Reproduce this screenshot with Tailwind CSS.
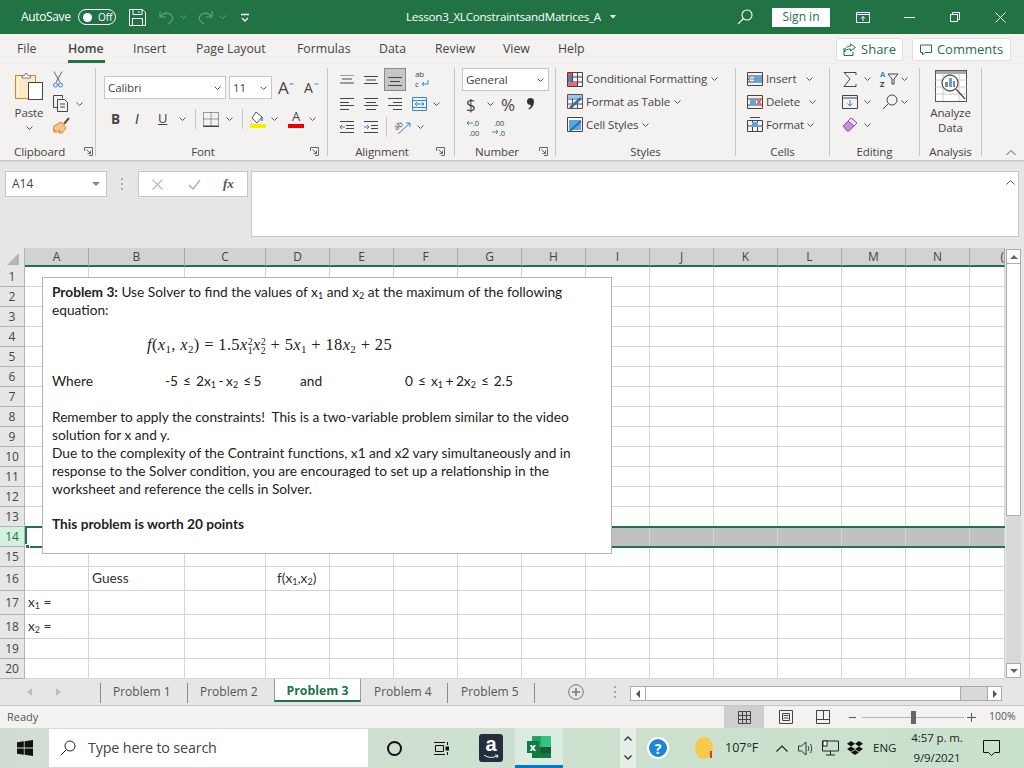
<!DOCTYPE html>
<html><head><meta charset="utf-8"><script src="https://cdn.jsdelivr.net/npm/@tailwindcss/browser@4"></script></head>
<body class="w-[1024px] h-[768px] overflow-hidden bg-[#e6e6e6] font-['Open_Sans',sans-serif] text-[#444]">
<svg width="0" height="0" class="absolute"><defs>
<symbol id="ch" viewBox="0 0 7 4"><path d="M.5.5l3 3 3-3" fill="none" stroke="#555" stroke-width="1"/></symbol>
<symbol id="lau" viewBox="0 0 9 9"><path d="M.5 4V.5H8.500V8.500H5M2.500 2.500l4 4M6.500 3.500v3h-3" fill="none" stroke="#666"/></symbol>
</defs></svg>

<!-- title bar -->
<div class="h-[34px] bg-[#217346] flex items-center text-white text-[12px]">
 <span class="ml-[21px] w-[50px] whitespace-nowrap text-[12px] tracking-[-0.35px]">AutoSave</span>
 <div class="ml-[7px] w-[38px] h-[16px] rounded-full border border-white flex items-center pl-[4px]"><span class="w-[9px] h-[9px] rounded-full bg-white"></span><span class="ml-[6px] text-[10px]">Off</span></div>
 <svg class="ml-[13px]" width="17" height="17" viewBox="0 0 17 17" fill="none" stroke="#fff"><path d="M.5.500h13l3 3v13H.5zM4 .5v5h9v-5M3.500 16.500v-7h10v7M10 2v2"/></svg>
 <svg class="ml-[13px] opacity-30" width="15" height="15" viewBox="0 0 15 15" fill="none" stroke="#fff" stroke-width="1.200"><path d="M1 1v6h6M1 7c4-5 9-5 12-1 1.500 3-.5 6-4 8"/></svg>
 <svg class="ml-[6px] opacity-30" width="7" height="4" viewBox="0 0 7 4"><path d="M.5.500l3 3 3-3" fill="none" stroke="#fff"/></svg>
 <svg class="ml-[11px] opacity-30" width="15" height="15" viewBox="0 0 15 15" fill="none" stroke="#fff" stroke-width="1.200"><path d="M14 1v6H8M14 7C10 2 5 2 2 6c-1.500 3 .5 6 4 8"/></svg>
 <svg class="ml-[6px] opacity-30" width="7" height="4" viewBox="0 0 7 4"><path d="M.5.500l3 3 3-3" fill="none" stroke="#fff"/></svg>
 <svg class="ml-[14px]" width="10" height="9" viewBox="0 0 10 9" fill="none" stroke="#fff"><path d="M1 1.500h8M2 5l3 3 3-3" stroke-width="1.300"/></svg>
 <span class="ml-[156px] w-[198px] whitespace-nowrap text-[11.600px] tracking-[-0.25px]">Lesson3_XLConstraintsandMatrices_A</span>
 <svg class="ml-[6px]" width="6" height="4" viewBox="0 0 6 4"><path d="M0 0h6L3 3.500z" fill="#fff"/></svg>
 <svg class="ml-[121px]" width="16" height="16" viewBox="0 0 16 16" fill="none" stroke="#fff" stroke-width="1.100"><circle cx="10" cy="6" r="5"/><path d="M6.500 9.500L1 15"/></svg>
 <div class="ml-[19px] w-[58px] h-[19px] bg-white text-[#217346] flex items-center justify-center text-[12px]">Sign in</div>
 <svg class="ml-[26px]" width="14" height="11" viewBox="0 0 14 11" fill="none" stroke="#fff"><path d="M.5.500h13v10H.5zM.5 2.500h13M7 9V4.500M5 6.500l2-2 2 2"/></svg>
 <span class="ml-[34px] w-[11px] h-[1px] bg-white"></span>
 <svg class="ml-[35px]" width="10" height="10" viewBox="0 0 10 10" fill="none" stroke="#fff"><path d="M.5 2.500h7v7h-7zM2.500 2.500v-2h7v7h-2"/></svg>
 <svg class="ml-[35px]" width="11" height="11" viewBox="0 0 11 11" stroke="#fff"><path d="M.5.500l10 10M10.500.500l-10 10"/></svg>
</div>

<!-- tab row -->
<div class="h-[30px] bg-[#f3f2f1] flex items-center pt-[1px] text-[12.300px] text-[#444] whitespace-nowrap">
 <span class="ml-[17px] w-[51px]">File</span>
 <span class="w-[37px] mr-[28px] h-[28px] self-start border-b-[3px] border-[#217346] flex items-center pt-[3px] font-semibold">Home</span>
 <span class="w-[63px]">Insert</span><span class="w-[101px]">Page Layout</span><span class="w-[82px]">Formulas</span><span class="w-[56px]">Data</span><span class="w-[68px]">Review</span><span class="w-[55px]">View</span><span class="w-[278px]">Help</span>
 <div class="w-[67px] h-[23px] bg-white rounded-[2px] border border-[#e1dfdd] flex items-center justify-center gap-[5px] text-[#217346] text-[13px] font-medium"><svg width="13" height="13" viewBox="0 0 13 13" fill="none" stroke="#217346"><path d="M7.500 1v2C3 3.500 1.500 6 1.500 9c1-2 3-3 6-3v2l5-3.500zM1 5v7.500h9V9"/></svg>Share</div>
 <div class="ml-[9px] w-[99px] h-[23px] bg-white rounded-[2px] border border-[#e1dfdd] flex items-center justify-center gap-[5px] text-[#217346] text-[13px] font-medium"><svg width="12" height="12" viewBox="0 0 12 12" fill="none" stroke="#217346"><path d="M.5 1h11v7.500H5L2.500 11V8.500h-2z"/></svg>Comments</div>
</div>

<!-- ribbon -->
<div class="h-[96px] bg-[#f3f2f1] flex pt-[4px] items-start text-[11.500px] text-[#444] whitespace-nowrap shadow-[0_1px_2px_#bbb] relative tracking-[-0.1px]">
 <!-- clipboard -->
 <div class="w-[96px] h-[88px] border-r border-[#c8c6c4] flex flex-col">
  <div class="flex-1 flex pl-[15px]">
   <div class="w-[28px] mr-[6px] flex flex-col items-center">
    <svg class="mt-[3px]" width="28" height="29" viewBox="0 0 28 29"><rect x=".5" y="4.500" width="20" height="23" fill="#fce8c3" stroke="#d9862a"/><path d="M3 7h16M3 7v20" stroke="#fff" fill="none"/><path d="M7 7V4.500h2.500L11 2l2 2.500h2.500V7z" fill="#fff" stroke="#777"/><rect x="13.500" y="11.500" width="14" height="17" fill="#fff" stroke="#444"/></svg>
    <span class="mt-[4px]">Paste</span>
    <svg class="mt-[5px]" width="7" height="4"><use href="#ch"/></svg>
   </div>
   <div class="ml-[4px] flex flex-col items-start">
    <svg class="mt-[3px]" width="10" height="17" viewBox="0 0 10 17" fill="none"><path d="M1 .5l6 11M9 .5l-6 11" stroke="#666"/><circle cx="2.500" cy="14" r="2" stroke="#2b8ad4"/><circle cx="7.500" cy="14" r="2" stroke="#2b8ad4"/></svg>
    <div class="mt-[7px] flex items-center gap-[6px]"><svg width="17" height="17" viewBox="0 0 17 17" fill="none" stroke="#444"><path d="M.5.500h9v3M.5.500v12h4"/><path d="M4.500 4.500h7l3 3v9h-10zM7 9h5M7 12h5"/></svg><svg width="7" height="4"><use href="#ch"/></svg></div>
    <svg class="mt-[5px]" width="17" height="17" viewBox="0 0 17 17"><path d="M1 9l7-4 5 6-4 5H6l1-3-3 2H1l1-2-2 1z" fill="#f7c48c" stroke="#d9862a"/><path d="M11 7l5-6" stroke="#555" stroke-width="2"/></svg>
   </div>
  </div>
  <div class="h-[14px] leading-[20px] flex items-start"><span class="ml-[14px] w-[70px]">Clipboard</span><svg class="mt-[5px]" width="9" height="9"><use href="#lau"/></svg></div>
 </div>
 <!-- font -->
 <div class="w-[232px] h-[88px] border-r border-[#c8c6c4] flex flex-col">
  <div class="flex-1 pt-[8px] pl-[8px]">
   <div class="flex items-center h-[23px]">
    <div class="w-[122px] h-[23px] bg-white border border-[#c8c6c4] flex items-center justify-between pl-[3px] pr-[4px]"><span>Calibri</span><svg width="7" height="4"><use href="#ch"/></svg></div>
    <div class="ml-[3px] w-[43px] h-[23px] bg-white border border-[#c8c6c4] flex items-center justify-between pl-[3px] pr-[4px]"><span>11</span><svg width="7" height="4"><use href="#ch"/></svg></div>
    <span class="ml-[6px] w-[11px] text-[17px] text-[#444] leading-none">A</span><svg class="mb-[8px]" width="5" height="4" viewBox="0 0 5 4"><path d="M.5 3L2.500 1l2 2" fill="none" stroke="#666"/></svg>
    <span class="ml-[10px] w-[10px] text-[14px] leading-none">A</span><svg class="mb-[8px]" width="5" height="4" viewBox="0 0 5 4"><path d="M.5 1l2 2 2-2" fill="none" stroke="#2b8ad4"/></svg>
   </div>
   <div class="flex items-center h-[20px] mt-[10px] pl-[7px]">
    <span class="w-[24px] font-bold text-[13.500px]">B</span><span class="w-[23px] italic text-[14px] font-['Liberation_Sans']">I</span><span class="w-[17px] underline text-[13px]">U</span>
    <svg class="ml-[4px]" width="7" height="4"><use href="#ch"/></svg>
    <span class="ml-[9px] w-[1px] h-[20px] bg-[#c8c6c4]"></span>
    <svg class="ml-[7px]" width="16" height="15" viewBox="0 0 16 15" fill="none" stroke="#444" stroke-dasharray="1 1"><path d="M.5.500h15v13H.5zM8 .5v13M.5 7h15"/><path d="M0 14.500h16" stroke-dasharray="none"/></svg>
    <svg class="ml-[7px]" width="7" height="4"><use href="#ch"/></svg>
    <span class="ml-[9px] w-[1px] h-[20px] bg-[#c8c6c4]"></span>
    <svg class="ml-[7px]" width="16" height="17" viewBox="0 0 16 17"><path d="M6 1l6 5-5 6-5-5z" fill="#fff" stroke="#555"/><path d="M12 6v4" stroke="#2b8ad4" stroke-width="1.500"/><rect y="13" width="16" height="4" fill="#ffeb00"/></svg>
    <svg class="ml-[5px]" width="7" height="4"><use href="#ch"/></svg>
    <div class="ml-[10px] w-[16px] flex flex-col items-center leading-none"><span class="text-[13px] h-[13px] leading-[13px]">A</span><span class="mt-[1px] w-[16px] h-[4px] bg-[#f00000]"></span></div>
    <svg class="ml-[5px]" width="7" height="4"><use href="#ch"/></svg>
   </div>
  </div>
  <div class="h-[14px] leading-[20px] flex items-start"><span class="w-[214px] text-center">Font</span><svg class="mt-[5px]" width="9" height="9"><use href="#lau"/></svg></div>
 </div>
 <!-- alignment -->
 <div class="w-[127px] h-[88px] border-r border-[#c8c6c4] flex flex-col">
  <div class="flex-1 pl-[12px]">
   <div class="h-[23px] flex items-center">
    <svg width="14" height="10" viewBox="0 0 14 10" stroke="#444"><path d="M0 .5h14M2 4.500h10M0 8.500h14" transform="translate(0,-.5)"/></svg>
    <svg class="ml-[10px]" width="14" height="10" viewBox="0 0 14 10" stroke="#444"><path d="M0 1.500h14M2 5h10M0 8.500h14"/></svg>
    <div class="ml-[6px] w-[22px] h-[23px] bg-[#c6c6c6] border border-[#8a8a8a] flex items-center justify-center"><svg width="14" height="12" viewBox="0 0 14 12" stroke="#444"><path d="M0 3.500h14M2 7.500h10M0 11.500h14"/></svg></div>
    <svg class="ml-[9px] overflow-visible" width="14" height="20" viewBox="0 0 14 20" fill="none"><text x="0" y="7" font-size="8" fill="#444" font-family="Open Sans">ab</text><text x="0" y="17" font-size="8" fill="#444" font-family="Open Sans">c</text><path d="M13 10v4H7M9 12l-2 2 2 2" stroke="#2b8ad4"/></svg>
   </div>
   <div class="h-[23px] flex items-center mt-[1px]">
    <svg width="14" height="12" viewBox="0 0 14 12" stroke="#444"><path d="M0 .5h14M0 4.500h9M0 7.500h14M0 11.500h9"/></svg>
    <svg class="ml-[10px]" width="14" height="12" viewBox="0 0 14 12" stroke="#444"><path d="M0 .5h14M2 4.500h10M0 7.500h14M2 11.500h10"/></svg>
    <svg class="ml-[10px]" width="14" height="12" viewBox="0 0 14 12" stroke="#444"><path d="M0 .5h14M5 4.500h9M0 7.500h14M5 11.500h9"/></svg>
    <svg class="ml-[10px]" width="15" height="14" viewBox="0 0 15 14" fill="none" stroke="#2b8ad4"><path d="M.5.500h14v13H.5zM.5 3.500h14M.5 10.500h14"/><path d="M3 7h9M5 5L3 7l2 2M10 5l2 2-2 2" stroke="#2b8ad4"/></svg>
    <svg class="ml-[6px]" width="7" height="4"><use href="#ch"/></svg>
   </div>
   <div class="h-[23px] flex items-center">
    <svg width="14" height="12" viewBox="0 0 14 12" fill="none"><path d="M0 .5h14M6 4.500h8M6 7.500h8M0 11.500h14" stroke="#444"/><path d="M5 6H0M2 4L0 6l2 2" stroke="#2b8ad4"/></svg>
    <svg class="ml-[10px]" width="14" height="12" viewBox="0 0 14 12" fill="none"><path d="M0 .5h14M7 4.500h7M7 7.500h7M0 11.500h14" stroke="#444"/><path d="M0 6h5M3 4l2 2-2 2" stroke="#2b8ad4"/></svg>
    <span class="ml-[8px] w-[1px] h-[20px] bg-[#c8c6c4]"></span>
    <svg class="ml-[7px] overflow-visible" width="17" height="16" viewBox="0 0 17 16" fill="none"><text x="0" y="9" font-size="8" fill="#444" font-family="Open Sans" transform="rotate(-40 5 7)">ab</text><path d="M4 15L16 4M16 4h-4M16 4v4" stroke="#2b8ad4"/></svg>
    <svg class="ml-[6px]" width="7" height="4"><use href="#ch"/></svg>
   </div>
  </div>
  <div class="h-[14px] leading-[20px] flex items-start"><span class="w-[108px] text-center">Alignment</span><svg class="mt-[5px]" width="9" height="9"><use href="#lau"/></svg></div>
 </div>
 <!-- number -->
 <div class="w-[101px] h-[88px] border-r border-[#c8c6c4] flex flex-col">
  <div class="flex-1 pl-[7px]">
   <div class="w-[87px] h-[23px] bg-white border border-[#c8c6c4] flex items-center justify-between pl-[3px] pr-[4px]"><span>General</span><svg width="7" height="4"><use href="#ch"/></svg></div>
   <div class="h-[24px] flex items-center pl-[4px] mt-[1px]"><span class="w-[14px] text-[17px] leading-none">$</span><svg class="ml-[7px]" width="7" height="4"><use href="#ch"/></svg><span class="ml-[7px] text-[17px] leading-none">%</span>
    <svg class="ml-[12px]" width="8" height="12" viewBox="0 0 8 12"><path d="M0 3.500a3.500 3.500 0 1 1 7 0c0 4-2 6.500-5 8l-.6-1c1.500-1 2.400-2.200 2.600-3.600A3.400 3.400 0 0 1 0 3.500z" fill="#333"/></svg></div>
   <div class="h-[23px] flex items-center pl-[4px]">
    <svg class="overflow-visible" width="17" height="18" viewBox="0 0 17 18" fill="none"><text x="7" y="7" font-size="7.500" fill="#444" font-family="Open Sans">.0</text><text x="3" y="17" font-size="7.500" fill="#444" font-family="Open Sans">.00</text><path d="M7 4H1M3 2L1 4l2 2" stroke="#2b8ad4"/></svg>
    <svg class="ml-[8px] overflow-visible" width="17" height="18" viewBox="0 0 17 18" fill="none"><text x="3" y="7" font-size="7.500" fill="#444" font-family="Open Sans">.00</text><text x="8" y="17" font-size="7.500" fill="#444" font-family="Open Sans">.0</text><path d="M1 13h6M5 11l2 2-2 2" stroke="#2b8ad4"/></svg>
   </div>
  </div>
  <div class="h-[14px] leading-[20px] flex items-start"><span class="w-[84px] text-center">Number</span><svg class="mt-[5px]" width="9" height="9"><use href="#lau"/></svg></div>
 </div>
 <!-- styles -->
 <div class="w-[180px] h-[88px] border-r border-[#c8c6c4] flex flex-col">
  <div class="flex-1 pl-[11px]">
   <div class="h-[22px] flex items-center"><svg width="16" height="15" viewBox="0 0 16 15"><path d="M.5.500h15v14H.5zM5.500.5v14M10.500.5v14M.5 5h15M.5 10h15" fill="none" stroke="#444"/><rect x="1" y="1" width="4" height="4" fill="#e84c4c"/><rect x="1" y="5" width="4" height="5" fill="#2b8ad4"/><rect x="1" y="10" width="9" height="4" fill="#ee6a6a"/></svg><span class="ml-[3px]">Conditional Formatting</span><svg class="ml-[4px]" width="7" height="4"><use href="#ch"/></svg></div>
   <div class="h-[23px] flex items-center"><svg width="16" height="15" viewBox="0 0 16 15"><path d="M.5.500h15v14H.5zM5.500.5v14M10.500.5v14M.5 5h15M.5 10h15" fill="none" stroke="#555"/><rect x="1" y="1" width="14" height="3.500" fill="#9cc8ec"/><path d="M3 14L14 4" stroke="#2b6fb0" stroke-width="2.500"/></svg><span class="ml-[3px]">Format as Table</span><svg class="ml-[4px]" width="7" height="4"><use href="#ch"/></svg></div>
   <div class="h-[23px] flex items-center"><svg width="16" height="15" viewBox="0 0 16 15"><path d="M.5.500h15v14H.5z" fill="#fff" stroke="#444"/><rect x="2" y="3" width="12" height="10" fill="#5ba5e0"/><path d="M3 14L14 4" stroke="#2b6fb0" stroke-width="2"/></svg><span class="ml-[3px]">Cell Styles</span><svg class="ml-[4px]" width="7" height="4"><use href="#ch"/></svg></div>
  </div>
  <div class="h-[14px] leading-[20px] text-center">Styles</div>
 </div>
 <!-- cells -->
 <div class="w-[94px] h-[88px] border-r border-[#c8c6c4] flex flex-col">
  <div class="flex-1 pl-[11px]">
   <div class="h-[22px] flex items-center"><svg width="16" height="14" viewBox="0 0 16 14" fill="none"><path d="M.5.500h15v13H.5zM.5 4h15M.5 10h15" stroke="#444"/><rect x="7" y="4.500" width="8" height="5" fill="#5ba5e0"/><path d="M8 7H1M3 5L1 7l2 2" stroke="#2b8ad4"/></svg><span class="ml-[3px] w-[40px]">Insert</span><svg width="7" height="4"><use href="#ch"/></svg></div>
   <div class="h-[23px] flex items-center"><svg width="16" height="14" viewBox="0 0 16 14" fill="none"><path d="M.5.500h15v13H.5zM.5 4h15M.5 10h15" stroke="#444"/><rect x="3" y="4.500" width="6" height="5" fill="#5ba5e0"/><path d="M10 4.500l4 5M14 4.500l-4 5" stroke="#e84c4c" stroke-width="1.500"/></svg><span class="ml-[3px] w-[43px]">Delete</span><svg width="7" height="4"><use href="#ch"/></svg></div>
   <div class="h-[23px] flex items-center"><svg width="16" height="15" viewBox="0 0 16 15" fill="none"><path d="M.5 3.500h15v11H.5zM5.500 3.500v11M10.500 3.500v11M.5 9h15M3 .5h10" stroke="#444"/><rect x="5" y="5" width="6" height="5" fill="#5ba5e0"/></svg><span class="ml-[3px] w-[41px]">Format</span><svg width="7" height="4"><use href="#ch"/></svg></div>
  </div>
  <div class="h-[14px] leading-[20px] text-center">Cells</div>
 </div>
 <!-- editing -->
 <div class="w-[90px] h-[88px] border-r border-[#c8c6c4] flex flex-col">
  <div class="flex-1 pl-[12px]">
   <div class="h-[22px] flex items-center"><svg width="16" height="15" viewBox="0 0 16 15" fill="none" stroke="#444"><path d="M14 3V.5H2L8 7l-6 7.500h12V12"/></svg><svg class="ml-[6px]" width="7" height="4"><use href="#ch"/></svg><svg class="ml-[9px] overflow-visible" width="19" height="18" viewBox="0 0 19 18" fill="none"><text x="0" y="7" font-size="7.500" fill="#2b8ad4" font-family="Open Sans" font-weight="bold">A</text><text x="0" y="17" font-size="7.500" fill="#444" font-family="Open Sans" font-weight="bold">Z</text><path d="M8 4h10l-4 5v5h-2V9z" stroke="#444"/></svg><svg class="ml-[2px]" width="7" height="4"><use href="#ch"/></svg></div>
   <div class="h-[23px] flex items-center"><svg width="16" height="14" viewBox="0 0 16 14" fill="none"><path d="M.5.500h15v13H.5zM.5 3h15" stroke="#444"/><path d="M8 5v6M5.500 8.500L8 11l2.500-2.500" stroke="#2b8ad4"/></svg><svg class="ml-[6px]" width="7" height="4"><use href="#ch"/></svg><svg class="ml-[11px]" width="16" height="16" viewBox="0 0 16 16" fill="none" stroke="#444"><circle cx="10" cy="6" r="5"/><path d="M6.500 9.500L1 15"/></svg><svg class="ml-[3px]" width="7" height="4"><use href="#ch"/></svg></div>
   <div class="h-[23px] flex items-center"><svg width="16" height="16" viewBox="0 0 16 16"><path d="M1 9l8-8 6 5-8 8H5z" fill="#c48fd4" stroke="#9b4fb5"/><path d="M9 1l6 5-3 3-6-5z" fill="#f3e6f7" stroke="#9b4fb5"/></svg><svg class="ml-[6px]" width="7" height="4"><use href="#ch"/></svg></div>
  </div>
  <div class="h-[14px] leading-[20px] text-center">Editing</div>
 </div>
 <!-- analysis -->
 <div class="w-[62px] h-[88px] border-r border-[#c8c6c4] flex flex-col items-center">
  <svg class="mt-[2px]" width="32" height="32" viewBox="0 0 32 32" fill="none"><rect x=".5" y=".5" width="31" height="31" fill="#fff" stroke="#555"/><rect x="1" y="1" width="30" height="3" fill="#aaa"/><path d="M.5 10h31M.5 17h31M.5 24h31M8 4v27M24 4v27" stroke="#ccc"/><circle cx="15" cy="13" r="8" fill="#fff" stroke="#555" stroke-width="1.300"/><rect x="10" y="12" width="3" height="5" fill="#888"/><rect x="14" y="8" width="3" height="9" fill="#5ba5e0"/><rect x="18" y="11" width="2" height="6" fill="#888"/><path d="M21 19l9 10" stroke="#555" stroke-width="1.500"/></svg>
  <div class="flex-1 flex flex-col items-center mt-[3px] leading-[15px]"><span>Analyze</span><span>Data</span></div>
  <div class="h-[14px] leading-[20px]">Analysis</div>
 </div>
 <svg class="ml-[24px] mt-[82px]" width="10" height="6" viewBox="0 0 10 6" fill="none" stroke="#555"><path d="M.5 5L5 .5 9.500 5"/></svg>
</div>

<!-- formula bar -->
<div class="h-[88px] bg-[#e6e6e6] flex items-start pt-[11px] text-[12px] text-[#444]">
 <div class="ml-[5px] w-[102px] h-[26px] bg-white border border-[#c6c6c6] flex items-center justify-between pl-[6px] pr-[6px]"><span>A14</span><svg width="8" height="4" viewBox="0 0 8 4"><path d="M0 0h8L4 4z" fill="#888"/></svg></div>
 <svg class="ml-[14px] mt-[7px]" width="3" height="12" viewBox="0 0 3 12" fill="#aaa"><rect y="0" width="2" height="2"/><rect y="5" width="2" height="2"/><rect y="10" width="2" height="2"/></svg>
 <div class="ml-[14px] w-[110px] h-[26px] bg-white border border-[#c6c6c6] flex items-center pl-[13px]">
  <svg width="11" height="11" viewBox="0 0 11 11" stroke="#bbb" stroke-width="1.300"><path d="M.5.500l10 10M10.500.500l-10 10"/></svg>
  <svg class="ml-[25px]" width="13" height="11" viewBox="0 0 13 11" fill="none" stroke="#bbb" stroke-width="1.800"><path d="M1 6l4 4 7-9"/></svg>
  <span class="ml-[22px] italic font-['Liberation_Serif'] text-[13px] font-bold text-[#555]">fx</span>
 </div>
 <div class="ml-[3px] w-[768px] h-[66px] bg-white border border-[#c6c6c6] flex justify-end pt-[8px] pr-[3px]"><svg width="9" height="5" viewBox="0 0 9 5" fill="none" stroke="#555"><path d="M.5 4.500l4-4 4 4"/></svg></div>
</div>

<!-- sheet -->
<div class="relative h-[431px] bg-white overflow-hidden">
 <div class="grid grid-cols-[25px_64px_96px_81px_repeat(11,64px)_35px] grid-rows-[19px_repeat(15,20px)_repeat(3,24px)_repeat(2,20px)] text-[12px] [&>div]:border-r [&>div]:border-b [&>div]:border-[#d4d4d4] [&>p]:flex [&>p]:items-center [&>p]:justify-center [&>p]:text-[#444] [&>u]:no-underline [&>u]:flex [&>u]:items-center [&>u]:justify-center [&>u]:bg-[#d2d2d2] [&>u]:border-r [&>u]:border-[#a8a8a8] [&>u]:border-b-2 [&>u]:border-b-[#217346] [&>p]:bg-[#e6e6e6] [&>p]:border-b [&>p]:border-r [&>p]:border-[#b4b4b4]">
<p class="!border-b-0"><svg width="14" height="14" viewBox="0 0 14 14" class="mt-[2px]"><path d="M14 1v12H2z" fill="#b6b6b6"/></svg></p><u>A</u><u>B</u><u>C</u><u>D</u><u>E</u><u>F</u><u>G</u><u>H</u><u>I</u><u>J</u><u>K</u><u>L</u><u>M</u><u>N</u><u class="!justify-end overflow-hidden">(</u>
<p>1</p><div></div><div></div><div></div><div></div><div></div><div></div><div></div><div></div><div></div><div></div><div></div><div></div><div></div><div></div><div></div>
<p>2</p><div></div><div></div><div></div><div></div><div></div><div></div><div></div><div></div><div></div><div></div><div></div><div></div><div></div><div></div><div></div>
<p>3</p><div></div><div></div><div></div><div></div><div></div><div></div><div></div><div></div><div></div><div></div><div></div><div></div><div></div><div></div><div></div>
<p>4</p><div></div><div></div><div></div><div></div><div></div><div></div><div></div><div></div><div></div><div></div><div></div><div></div><div></div><div></div><div></div>
<p>5</p><div></div><div></div><div></div><div></div><div></div><div></div><div></div><div></div><div></div><div></div><div></div><div></div><div></div><div></div><div></div>
<p>6</p><div></div><div></div><div></div><div></div><div></div><div></div><div></div><div></div><div></div><div></div><div></div><div></div><div></div><div></div><div></div>
<p>7</p><div></div><div></div><div></div><div></div><div></div><div></div><div></div><div></div><div></div><div></div><div></div><div></div><div></div><div></div><div></div>
<p>8</p><div></div><div></div><div></div><div></div><div></div><div></div><div></div><div></div><div></div><div></div><div></div><div></div><div></div><div></div><div></div>
<p>9</p><div></div><div></div><div></div><div></div><div></div><div></div><div></div><div></div><div></div><div></div><div></div><div></div><div></div><div></div><div></div>
<p>10</p><div></div><div></div><div></div><div></div><div></div><div></div><div></div><div></div><div></div><div></div><div></div><div></div><div></div><div></div><div></div>
<p>11</p><div></div><div></div><div></div><div></div><div></div><div></div><div></div><div></div><div></div><div></div><div></div><div></div><div></div><div></div><div></div>
<p>12</p><div></div><div></div><div></div><div></div><div></div><div></div><div></div><div></div><div></div><div></div><div></div><div></div><div></div><div></div><div></div>
<p>13</p><div></div><div></div><div></div><div></div><div></div><div></div><div></div><div></div><div></div><div></div><div></div><div></div><div></div><div></div><div></div>
<p class="!bg-[#d3f0e0] !text-[#217346]">14</p><div></div><div class="bg-[#c0c0c0]"></div><div class="bg-[#c0c0c0]"></div><div class="bg-[#c0c0c0]"></div><div class="bg-[#c0c0c0]"></div><div class="bg-[#c0c0c0]"></div><div class="bg-[#c0c0c0]"></div><div class="bg-[#c0c0c0]"></div><div class="bg-[#c0c0c0]"></div><div class="bg-[#c0c0c0]"></div><div class="bg-[#c0c0c0]"></div><div class="bg-[#c0c0c0]"></div><div class="bg-[#c0c0c0]"></div><div class="bg-[#c0c0c0]"></div><div class="bg-[#c0c0c0]"></div>
<p>15</p><div></div><div></div><div></div><div></div><div></div><div></div><div></div><div></div><div></div><div></div><div></div><div></div><div></div><div></div><div></div>
<p>16</p><div></div><div class="pl-[3px] flex items-center text-[#333] text-[13.700px] font-['Lato']">Guess</div><div></div><div class="pl-[11px] flex items-center text-[#333] text-[13.700px] font-['Lato'] whitespace-nowrap"><span>f(x<sub class="text-[9px]">1</sub>,x<sub class="text-[9px]">2</sub>)</span></div><div></div><div></div><div></div><div></div><div></div><div></div><div></div><div></div><div></div><div></div><div></div>
<p>17</p><div class="pl-[3px] flex items-center text-[#333] text-[13.700px] font-['Lato'] whitespace-nowrap"><span>x<sub class="text-[9px]">1</sub> =</span></div><div></div><div></div><div></div><div></div><div></div><div></div><div></div><div></div><div></div><div></div><div></div><div></div><div></div><div></div>
<p>18</p><div class="pl-[3px] flex items-center text-[#333] text-[13.700px] font-['Lato'] whitespace-nowrap"><span>x<sub class="text-[9px]">2</sub> =</span></div><div></div><div></div><div></div><div></div><div></div><div></div><div></div><div></div><div></div><div></div><div></div><div></div><div></div><div></div>
<p>19</p><div></div><div></div><div></div><div></div><div></div><div></div><div></div><div></div><div></div><div></div><div></div><div></div><div></div><div></div><div></div>
<p>20</p><div></div><div></div><div></div><div></div><div></div><div></div><div></div><div></div><div></div><div></div><div></div><div></div><div></div><div></div><div></div>
 </div>
 <!-- selection outline -->
 <div class="absolute left-[25px] top-[278px] w-[980px] h-[22px] border-y-2 border-l-2 border-[#217346]"></div>
 <div class="absolute left-[25px] top-[296px] w-[5px] h-[5px] bg-[#217346] border border-white"></div>
 <!-- text box -->
 <div class="absolute left-[42px] top-[29px] w-[570px] h-[277px] bg-white border border-[#b4b4b4] pl-[9px] pt-[5px] font-['Lato'] text-[13.700px] leading-[18px] text-[#222] whitespace-nowrap">
  <p><b>Problem 3:</b> Use Solver to find the values of x<sub class="text-[9px]">1</sub> and x<sub class="text-[9px]">2</sub> at the maximum of the following</p>
  <p>equation:</p>
  <p class="mt-[17px] pl-[95px] font-['Liberation_Serif'] text-[16.500px] tracking-[0.35px]"><i>f</i>(<i>x</i><sub class="text-[11px]">1</sub>, <i>x</i><sub class="text-[11px]">2</sub>) = 1.5<i>x</i><span class="inline-flex flex-col align-middle text-[10px] leading-[9px]"><span>2</span><span>1</span></span><i>x</i><span class="inline-flex flex-col align-middle text-[10px] leading-[9px]"><span>2</span><span>2</span></span> + 5<i>x</i><sub class="text-[11px]">1</sub> + 18<i>x</i><sub class="text-[11px]">2</sub> + 25</p>
  <div class="mt-[17px] flex"><span class="w-[113px]">Where</span><span class="w-[135px] [word-spacing:-1px]">-5 &nbsp;≤ &nbsp;2x<sub class="text-[9px]">1</sub> - x<sub class="text-[9px]">2</sub> &nbsp;≤ 5</span><span class="w-[105px]">and</span><span class="[word-spacing:-1px]">0 &nbsp;≤ &nbsp;x<sub class="text-[9px]">1</sub> + 2x<sub class="text-[9px]">2</sub> &nbsp;≤ &nbsp;2.5</span></div>
  <p class="mt-[18px]">Remember to apply the constraints!&nbsp; This is a two-variable problem similar to the video</p>
  <p>solution for x and y.</p>
  <p>Due to the complexity of the Contraint functions, x1 and x2 vary simultaneously and in</p>
  <p>response to the Solver condition, you are encouraged to set up a relationship in the</p>
  <p>worksheet and reference the cells in Solver.</p>
  <p class="mt-[17px] font-bold">This problem is worth 20 points</p>
 </div>
 <!-- vertical scrollbar -->
 <div class="absolute left-[1005px] top-0 w-[19px] h-[431px] bg-[#e6e6e6] flex flex-col items-start pt-[1px] pl-[1px]">
  <div class="w-[15px] h-[15px] bg-white border border-[#ababab] flex items-center justify-center"><svg width="8" height="4" viewBox="0 0 8 4"><path d="M4 0l4 4H0z" fill="#666"/></svg></div>
  <div class="w-[15px] h-[252px] bg-white border-x border-b border-[#ababab]"></div>
  <div class="w-[15px] h-[147px] bg-[#d9d9d9]"></div>
  <div class="w-[15px] h-[15px] bg-white border border-[#ababab] flex items-center justify-center"><svg width="8" height="4" viewBox="0 0 8 4"><path d="M0 0h8L4 4z" fill="#666"/></svg></div>
 </div>
</div>

<!-- sheet tabs -->
<div class="h-[27px] bg-[#e6e6e6] flex items-start text-[12px] text-[#555] border-b border-[#c6c6c6] whitespace-nowrap">
 <svg class="ml-[27px] mt-[9px]" width="5" height="8" viewBox="0 0 5 8"><path d="M5 0v8L0 4z" fill="#c0c0c0"/></svg>
 <svg class="ml-[24px] mt-[9px]" width="5" height="8" viewBox="0 0 5 8"><path d="M0 0v8l5-4z" fill="#c0c0c0"/></svg>
 <span class="ml-[39px] mt-[4px] h-[20px] border-l border-[#8a8a8a] w-[87px] pl-[12px] leading-[18px]">Problem 1</span>
 <span class="mt-[4px] h-[20px] border-l border-[#8a8a8a] w-[87px] pl-[12px] leading-[18px]">Problem 2</span>
 <span class="h-[24px] w-[87px] bg-white border-x border-t-0 border-[#9a9a9a] border-b-2 border-b-[#217346] font-bold text-[12.300px] text-[#217346] flex items-center justify-center pt-[4px] -mt-[1px]">Problem 3</span>
 <span class="mt-[4px] h-[20px] w-[86px] pl-[13px] leading-[18px]">Problem 4</span>
 <span class="mt-[4px] h-[20px] border-l border-[#8a8a8a] w-[88px] pl-[13px] border-r leading-[18px]">Problem 5</span>
 <svg class="ml-[33px] mt-[5px]" width="16" height="16" viewBox="0 0 16 16" fill="none" stroke="#777"><circle cx="8" cy="8" r="7.300"/><path d="M4 8h8M8 4v8" stroke-width="1.500"/></svg>
 <svg class="ml-[30px] mt-[7px]" width="3" height="12" viewBox="0 0 3 12" fill="#aaa"><rect y="0" width="2" height="2"/><rect y="5" width="2" height="2"/><rect y="10" width="2" height="2"/></svg>
 <div class="ml-[13px] mt-[7px] w-[372px] h-[15px] flex border border-[#ababab] bg-[#d9d9d9]">
  <div class="w-[15px] bg-white border-r border-[#ababab] flex items-center justify-center"><svg width="4" height="8" viewBox="0 0 4 8"><path d="M4 0v8L0 4z" fill="#555"/></svg></div>
  <div class="w-[315px] bg-white border-r border-[#ababab]"></div>
  <div class="w-[26px]"></div>
  <div class="w-[14px] bg-white border-l border-[#ababab] flex items-center justify-center"><svg width="4" height="8" viewBox="0 0 4 8"><path d="M0 0v8l4-4z" fill="#555"/></svg></div>
 </div>
</div>

<!-- status bar -->
<div class="h-[22px] bg-[#f3f2f1] flex items-center text-[11px] text-[#555]">
 <span class="ml-[7px] w-[717px]">Ready</span>
 <div class="w-[40px] h-[22px] bg-[#cecece] flex items-center justify-center"><svg width="13" height="13" viewBox="0 0 13 13" fill="none" stroke="#444"><path d="M.5.500h12v12H.5zM4.500.5v12M8.500.5v12M.5 4.500h12M.5 8.500h12"/></svg></div>
 <svg class="ml-[15px]" width="14" height="14" viewBox="0 0 14 14" fill="none" stroke="#444"><path d="M.5.500h13v13H.5zM3.500 3.500h7v7h-7zM4.500 5.500h5M4.500 8h5"/></svg>
 <svg class="ml-[23px]" width="14" height="14" viewBox="0 0 14 14" fill="none" stroke="#444"><path d="M.5.500h13v13H.5zM.5 9.500h13M7.500.5v9"/></svg>
 <span class="ml-[19px] w-[7px] h-[1px] bg-[#555]"></span>
 <div class="ml-[6px] w-[102px] h-[1px] bg-[#b5b5b5] flex items-center"><span class="ml-[49px] w-[5px] h-[13px] bg-[#666]"></span></div>
 <svg class="ml-[3px]" width="9" height="9" viewBox="0 0 9 9" stroke="#555"><path d="M0 4.500h9M4.500 0v9"/></svg>
 <span class="ml-[13px] text-[10.500px]">100%</span>
</div>

<!-- taskbar -->
<div class="h-[40px] bg-linear-to-r from-[#d3dcd3] via-[#cde0cf] to-[#c9e2cc] flex items-center text-[#222] whitespace-nowrap">
 <svg class="ml-[17px]" width="16" height="16" viewBox="0 0 16 16" fill="#111"><path d="M0 2.300l6.800-1v6.300H0zM7.600 1.200L16 0v7.600H7.600zM0 8.400h6.800v6.300L0 13.700zM7.600 8.400H16V16l-8.400-1.200z"/></svg>
 <div class="ml-[16px] w-[319px] h-[38px] bg-white flex items-center text-[14.300px] text-[#444] tracking-[-0.15px]">
  <svg class="ml-[11px]" width="16" height="16" viewBox="0 0 16 16" fill="none" stroke="#222"><circle cx="10" cy="6" r="5"/><path d="M6.500 9.500L1 15"/></svg>
  <span class="ml-[12px]">Type here to search</span>
 </div>
 <span class="ml-[19px] w-[15px] h-[15px] rounded-full border-[2.500px] border-[#111]"></span>
 <svg class="ml-[32px]" width="15" height="15" viewBox="0 0 15 15" fill="none" stroke="#111"><path d="M0 1.500h11M0 13.500h11M1.500 4.500h8v6h-8zM13.500 1v3M13.500 11v3"/><rect x="12" y="6" width="3" height="3" fill="#111"/></svg>
 <div class="ml-[30px] w-[24px] h-[28px] bg-[#232f3e] rounded-[3px] flex flex-col items-center justify-start"><span class="text-white font-bold text-[20px] leading-[20px] font-['Liberation_Sans']">a</span><svg width="16" height="5" viewBox="0 0 16 5" fill="none" stroke="#f5f5f5"><path d="M1 1c4 3 9 3 13 1M12 1l3 .5-1 2.500"/></svg></div>
 <div class="ml-[12px] w-[48px] h-[40px] bg-[#dcebdf] border-b-[3px] border-[#0078d7] flex items-center justify-center">
  <svg width="24" height="24" viewBox="0 0 24 24"><rect x="5" y="1" width="19" height="22" rx="1" fill="#21a366"/><rect x="5" y="12" width="19" height="11" fill="#107c41"/><rect x="14" y="1" width="10" height="11" fill="#33c481"/><rect x="14" y="12" width="10" height="6" fill="#185c37"/><rect x="0" y="6" width="12" height="12" fill="#107c41"/><text x="2.500" y="16" font-size="11" font-weight="bold" fill="#fff" font-family="Open Sans">x</text></svg>
 </div>
 <div class="ml-[57px] w-[16px] h-[40px] bg-[#e6ece6] flex flex-col items-center justify-between py-[8px]"><svg width="8" height="5" viewBox="0 0 8 5" fill="none" stroke="#333" stroke-width="1.300"><path d="M.5 4.500L4 1l3.500 3.500"/></svg><svg width="8" height="5" viewBox="0 0 8 5" fill="none" stroke="#333" stroke-width="1.300"><path d="M.5.500L4 4l3.500-3.500"/></svg></div>
 <div class="ml-[11px] w-[22px] h-[22px] rounded-full bg-[#1a86d8] border-2 border-white flex items-center justify-center text-white font-bold text-[14px]">?</div>
 <svg class="ml-[26px]" width="19" height="23" viewBox="0 0 19 23"><ellipse cx="9" cy="11" rx="9" ry="11" fill="#f8c94a"/><rect x="15" y="14" width="2" height="7" fill="#e33"/></svg>
 <span class="ml-[11px] w-[33px] text-[12.500px]">107°F</span>
 <svg class="ml-[18px]" width="12" height="7" viewBox="0 0 12 7" fill="none" stroke="#222" stroke-width="1.200"><path d="M.5 6.500L6 1l5.500 5.500"/></svg>
 <svg class="ml-[10px]" width="17" height="15" viewBox="0 0 17 15" fill="none" stroke="#333"><path d="M.5 5h3L8 1v13L3.500 10h-3zM10 5c1 1.500 1 3.500 0 5M12.500 3c1.500 3 1.500 6 0 9" /></svg>
 <svg class="ml-[7px]" width="17" height="16" viewBox="0 0 17 16" fill="none" stroke="#222"><path d="M.5 1h16v10H.5zM8.500 11v4M4 15h9"/><rect x="1" y="1" width="4" height="5" fill="#fff"/></svg>
 <svg class="ml-[8px]" width="16" height="14" viewBox="0 0 16 14" fill="#111"><path d="M4 0l4 2.700L4 5.400 0 2.700zM12 0l4 2.700-4 2.700-4-2.700zM4 5.400l4 2.700-4 2.700-4-2.700zM12 5.400l4 2.700-4 2.700-4-2.700zM4 11.500l4-2.500 4 2.500-4 2.500z"/></svg>
 <span class="ml-[10px] text-[11.500px] w-[22px]">ENG</span>
 <div class="ml-[16px] w-[52px] flex flex-col items-center text-[11.500px] leading-[20px] tracking-[-0.1px]"><span>4:57 p. m.</span><span>9/9/2021</span></div>
 <svg class="ml-[20px]" width="17" height="16" viewBox="0 0 17 16" fill="none" stroke="#111"><path d="M.5.500h16v12h-5l-3 3-3-3h-5z"/></svg>
</div>
</body></html>
